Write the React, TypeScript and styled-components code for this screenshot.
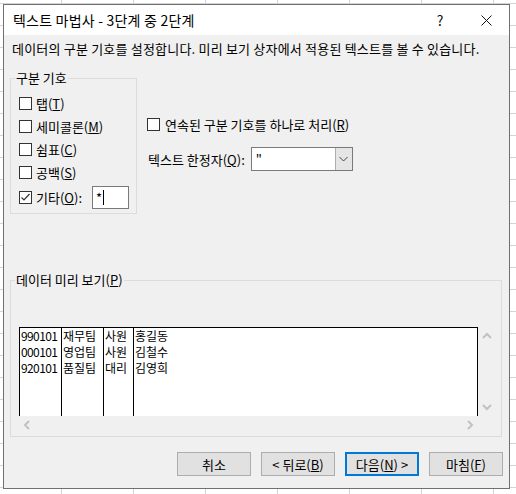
import React from 'react';
import styled, { createGlobalStyle } from 'styled-components';

const GlobalStyle = createGlobalStyle`
  html, body {
    margin: 0;
    padding: 0;
  }
  body {
    font-family: "Noto Sans CJK KR", "Noto Sans", sans-serif;
    font-size: 13px;
    color: #000;
    background: #fff;
  }
`;

const Desktop = styled.div`
  width: 516px;
  height: 494px;
  box-sizing: border-box;
  padding: 4px 6px 5px 3px;
  overflow: hidden;
  background-color: #fff;
  background-image:
    linear-gradient(to right, #d4d4d4 1px, transparent 1px),
    linear-gradient(to bottom, #d4d4d4 1px, transparent 1px);
  background-size: 72px 22px;
  background-position: 61px 3px;
`;

const Dialog = styled.div`
  width: 507px;
  height: 485px;
  box-sizing: border-box;
  border: 1px solid #707070;
  background: #f0f0f0;
  display: flex;
  flex-direction: column;
`;

const TitleBar = styled.div`
  height: 30px;
  flex-shrink: 0;
  background: #fff;
  display: flex;
  align-items: center;
  padding-left: 9px;
`;

const Title = styled.div`
  flex: 1;
  font-size: 14px;
  letter-spacing: 0.2px;
  line-height: 16px;
`;

const CaptionButton = styled.div`
  width: 46px;
  height: 30px;
  display: flex;
  align-items: center;
  justify-content: center;
  font-size: 14px;
  color: #111;
`;

const Body = styled.div`
  flex: 1;
  display: flex;
  flex-direction: column;
  padding: 6px 6px 0 6px;
`;

const Description = styled.div`
  line-height: 16px;
  padding-left: 2px;
  letter-spacing: 0.2px;
  white-space: nowrap;
`;

const TopSection = styled.div`
  display: flex;
  align-items: flex-start;
  gap: 10px;
  margin-top: 13px;
`;

const GroupBox = styled.fieldset<{ $width: number; $padTop: number }>`
  margin: 0;
  min-width: 0;
  box-sizing: border-box;
  width: ${p => p.$width}px;
  border: 1px solid #dcdcdc;
  padding: ${p => p.$padTop}px 4px 3px 4px;
`;

const Legend = styled.legend`
  padding: 0 1px;
  line-height: 16px;
`;

const OptionRow = styled.label<{ $height?: number }>`
  display: flex;
  align-items: center;
  gap: 4px;
  height: ${p => p.$height ?? 23}px;
  padding-left: 4px;
`;

const Box = styled.span`
  width: 13px;
  height: 13px;
  box-sizing: border-box;
  border: 1px solid #333;
  background: #fff;
  display: inline-flex;
  align-items: center;
  justify-content: center;
  flex-shrink: 0;
`;

const OtherInput = styled.div`
  width: 37px;
  height: 23px;
  box-sizing: border-box;
  border: 1px solid #7a7a7a;
  background: #fff;
  margin-left: auto;
  margin-right: 3px;
  display: flex;
  align-items: center;
  padding-left: 3px;
`;

const Caret = styled.span`
  width: 1px;
  height: 15px;
  background: #000;
  margin-left: 1px;
`;

const RightColumn = styled.div`
  display: flex;
  flex-direction: column;
  padding-top: 46px;
`;

const InlineOption = styled.label`
  display: flex;
  align-items: center;
  gap: 5px;
  height: 16px;
`;

const QualifierRow = styled.div`
  display: flex;
  align-items: center;
  margin-top: 15px;
  height: 24px;
  padding-left: 1px;
`;

const Select = styled.div`
  width: 102px;
  height: 24px;
  box-sizing: border-box;
  border: 1px solid #7a7a7a;
  background: #fff;
  margin-left: 6px;
  display: flex;
`;

const SelectValue = styled.div`
  flex: 1;
  padding-left: 4px;
  line-height: 22px;
`;

const SelectButton = styled.div`
  width: 16px;
  background: #e5e5e5;
  border-left: 1px solid #adadad;
  display: flex;
  align-items: center;
  justify-content: center;
`;

const PreviewGroup = styled(GroupBox)`
  margin-top: 58px;
`;

const PreviewGrid = styled.div`
  display: grid;
  grid-template-columns: 459px 17px;
  grid-template-rows: 89px 17px;
  margin-left: 4px;
`;

const PreviewBox = styled.div`
  box-sizing: border-box;
  border: 1px solid #000;
  border-bottom: none;
  background: #fff;
  display: flex;
  overflow: hidden;
`;

const Column = styled.div<{ $width?: number }>`
  ${p => (p.$width ? `width: ${p.$width}px;` : 'flex: 1;')}
  box-sizing: border-box;
  border-right: ${p => (p.$width ? '1px solid #000' : 'none')};
  padding-left: 1px;
  font-size: 12px;
  line-height: 16px;
  white-space: nowrap;
`;

const Digits = styled.span`
  letter-spacing: -0.6px;
`;

const HScroll = styled.div`
  display: flex;
  justify-content: space-between;
  align-items: center;
  padding: 0 4px;
`;

const VScroll = styled.div`
  display: flex;
  flex-direction: column;
  justify-content: space-between;
  align-items: center;
  padding: 5px 0 5px;
`;

const ButtonRow = styled.div`
  display: flex;
  justify-content: flex-end;
  gap: 10px;
  margin-top: 15px;
`;

const Button = styled.div<{ $focused?: boolean }>`
  width: 74px;
  height: 24px;
  box-sizing: border-box;
  background: #e1e1e1;
  border: ${p => (p.$focused ? '2px solid #0078d7' : '1px solid #adadad')};
  display: flex;
  align-items: center;
  justify-content: center;
`;

const Chevron = ({ dir }: { dir: 'up' | 'down' | 'left' | 'right' }) => {
  const pts = {
    up: '1,6 5,2 9,6',
    down: '1,2 5,6 9,2',
    left: '6,1 2,5 6,9',
    right: '2,1 6,5 2,9',
  }[dir];
  const vertical = dir === 'up' || dir === 'down';
  return (
    <svg width={vertical ? 10 : 8} height={vertical ? 8 : 10}>
      <polyline points={pts} fill="none" stroke="#c2c2c2" strokeWidth="2" />
    </svg>
  );
};

const Check = ({ checked }: { checked?: boolean }) => (
  <Box>
    {checked && (
      <svg width="11" height="11" viewBox="0 0 11 11">
        <polyline points="1.5,5.5 4,8 9.5,2" fill="none" stroke="#333" strokeWidth="1.2" />
      </svg>
    )}
  </Box>
);

const rows = [
  ['990101', '재무팀', '사원', '홍길동'],
  ['000101', '영업팀', '사원', '김철수'],
  ['920101', '품질팀', '대리', '김영희'],
];

const widths = [42, 42, 30, 0];

export default function App() {
  return (
    <>
      <GlobalStyle />
      <Desktop>
        <Dialog>
          <TitleBar>
            <Title>텍스트 마법사 - 3단계 중 2단계</Title>
            <CaptionButton>?</CaptionButton>
            <CaptionButton>
              <svg width="11" height="11" viewBox="0 0 11 11">
                <path d="M0.5 0.5 L10.5 10.5 M10.5 0.5 L0.5 10.5" stroke="#111" strokeWidth="1" />
              </svg>
            </CaptionButton>
          </TitleBar>
          <Body>
            <Description>
              데이터의 구분 기호를 설정합니다. 미리 보기 상자에서 적용된 텍스트를 볼 수 있습니다.
            </Description>
            <TopSection>
              <GroupBox $width={127} $padTop={6}>
                <Legend>구분 기호</Legend>
                <OptionRow>
                  <Check />
                  <span>탭(<u>T</u>)</span>
                </OptionRow>
                <OptionRow>
                  <Check />
                  <span>세미콜론(<u>M</u>)</span>
                </OptionRow>
                <OptionRow>
                  <Check />
                  <span>쉼표(<u>C</u>)</span>
                </OptionRow>
                <OptionRow>
                  <Check />
                  <span>공백(<u>S</u>)</span>
                </OptionRow>
                <OptionRow $height={26}>
                  <Check checked />
                  <span>기타(<u>O</u>):</span>
                  <OtherInput>
                    *<Caret />
                  </OtherInput>
                </OptionRow>
              </GroupBox>
              <RightColumn>
                <InlineOption>
                  <Check />
                  <span>연속된 구분 기호를 하나로 처리(<u>R</u>)</span>
                </InlineOption>
                <QualifierRow>
                  <span>텍스트 한정자(<u>Q</u>):</span>
                  <Select>
                    <SelectValue>"</SelectValue>
                    <SelectButton>
                      <svg width="9" height="6" viewBox="0 0 9 6">
                        <polyline points="0.5,1 4.5,5 8.5,1" fill="none" stroke="#444" strokeWidth="1" />
                      </svg>
                    </SelectButton>
                  </Select>
                </QualifierRow>
              </RightColumn>
            </TopSection>
            <PreviewGroup $width={492} $padTop={39}>
              <Legend>데이터 미리 보기(<u>P</u>)</Legend>
              <PreviewGrid>
                <PreviewBox>
                  {widths.map((w, ci) => (
                    <Column key={ci} $width={w || undefined}>
                      {rows.map((r, ri) => (
                        <div key={ri}>{ci === 0 ? <Digits>{r[ci]}</Digits> : r[ci]}</div>
                      ))}
                    </Column>
                  ))}
                </PreviewBox>
                <VScroll>
                  <Chevron dir="up" />
                  <Chevron dir="down" />
                </VScroll>
                <HScroll>
                  <Chevron dir="left" />
                  <Chevron dir="right" />
                </HScroll>
              </PreviewGrid>
            </PreviewGroup>
            <ButtonRow>
              <Button>취소</Button>
              <Button>&lt; 뒤로(<u>B</u>)</Button>
              <Button $focused>다음(<u>N</u>) &gt;</Button>
              <Button>마침(<u>F</u>)</Button>
            </ButtonRow>
          </Body>
        </Dialog>
      </Desktop>
    </>
  );
}
